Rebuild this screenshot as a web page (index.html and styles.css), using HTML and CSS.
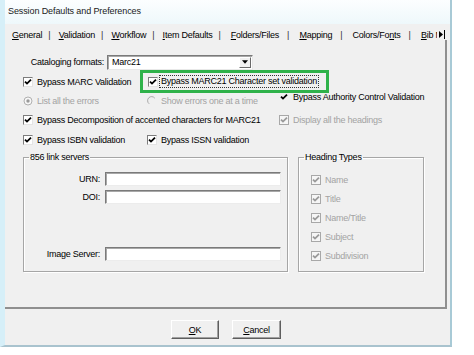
FILE: index.html
```html
<!DOCTYPE html>
<html>
<head>
  <title>Session Defaults and Preferences</title>
  <link rel="stylesheet" href="styles.css">
</head>
<body>
  <div class="window">
    <div class="titlebar">Session Defaults and Preferences</div>

    <div class="tabstrip">
      <div class="tabs">
        <span class="tab"><u>G</u>eneral</span><span class="sep">|</span>
        <span class="tab"><u>V</u>alidation</span><span class="sep">|</span>
        <span class="tab"><u>W</u>orkflow</span><span class="sep">|</span>
        <span class="tab"><u>I</u>tem Defaults</span><span class="sep">|</span>
        <span class="tab tab-wide"><u>F</u>olders/Files</span><span class="sep">|</span>
        <span class="tab tab-wide"><u>M</u>apping</span><span class="sep">|</span>
        <span class="tab tab-wide">Colors/Fo<u>n</u>ts</span><span class="sep">|</span>
        <span class="tab tab-wide"><u>B</u>ib MARC</span>
      </div>
      <span class="tabscroll">
        <svg viewBox="0 0 8 9"><path d="M2 1 L6 4.5 L2 8 Z" fill="#000"/><path d="M7.5 0 V9" stroke="#000" stroke-width="1"/></svg>
      </span>
    </div>

    <div class="page">
      <div class="row row-format">
        <span class="format-label">Cataloging formats:</span>
        <div class="combo">
          <span class="combo-text">Marc21</span>
          <span class="combo-btn">
            <svg viewBox="0 0 7 4"><path d="M0 0 H7 L3.5 4 Z" fill="#000"/></svg>
          </span>
        </div>
      </div>

      <div class="row row-1">
        <div class="cell c1-short">
          <span class="cb"><svg viewBox="0 0 8 8"><path d="M1 3.6 L3 5.6 L7 1.6" /></svg></span>
          Bypass MARC Validation
        </div>
        <div class="highlight">
          <span class="cb"><svg viewBox="0 0 8 8"><path d="M1 3.6 L3 5.6 L7 1.6" /></svg></span>
          <span class="focus">Bypass MARC21 Character set validation</span>
        </div>
      </div>

      <div class="row row-2">
        <div class="cell c1 disabled">
          <span class="rb"><svg viewBox="0 0 10 10"><circle cx="5" cy="5" r="4" fill="#f7f7f7" stroke="#b0b0b0"/><circle cx="5" cy="5" r="1.7" fill="#9a9a9a"/></svg></span>
          List all the errors
        </div>
        <div class="cell c2 disabled">
          <span class="rb"><svg viewBox="0 0 10 10"><path d="M7.8 2.2 A4 4 0 1 0 2.2 7.8" fill="none" stroke="#a8a8a8"/></svg></span>
          Show errors one at a time
        </div>
        <div class="cell authority">
          <span class="cb bare"><svg viewBox="0 0 8 8"><path d="M1 3.6 L3 5.6 L7 1.6" /></svg></span>
          Bypass Authority Control Validation
        </div>
      </div>

      <div class="row row-3">
        <div class="cell wide">
          <span class="cb"><svg viewBox="0 0 8 8"><path d="M1 3.6 L3 5.6 L7 1.6" /></svg></span>
          Bypass Decomposition of accented characters for MARC21
        </div>
        <div class="cell disabled">
          <span class="cb off"><svg viewBox="0 0 8 8"><path d="M1 3.6 L3 5.6 L7 1.6" /></svg></span>
          Display all the headings
        </div>
      </div>

      <div class="row row-4">
        <div class="cell c1">
          <span class="cb"><svg viewBox="0 0 8 8"><path d="M1 3.6 L3 5.6 L7 1.6" /></svg></span>
          Bypass ISBN validation
        </div>
        <div class="cell c2">
          <span class="cb"><svg viewBox="0 0 8 8"><path d="M1 3.6 L3 5.6 L7 1.6" /></svg></span>
          Bypass ISSN validation
        </div>
      </div>

      <div class="groups">
        <fieldset class="group links">
          <legend>856 link servers</legend>
          <div class="field urn">
            <span class="field-label">URN:</span>
            <span class="textbox"></span>
          </div>
          <div class="field doi">
            <span class="field-label">DOI:</span>
            <span class="textbox"></span>
          </div>
          <div class="field image">
            <span class="field-label">Image Server:</span>
            <span class="textbox"></span>
          </div>
        </fieldset>

        <fieldset class="group headings">
          <legend>Heading Types</legend>
          <div class="heading-list">
            <div class="cell disabled"><span class="cb off"><svg viewBox="0 0 8 8"><path d="M1 3.6 L3 5.6 L7 1.6" /></svg></span>Name</div>
            <div class="cell disabled"><span class="cb off"><svg viewBox="0 0 8 8"><path d="M1 3.6 L3 5.6 L7 1.6" /></svg></span>Title</div>
            <div class="cell disabled"><span class="cb off"><svg viewBox="0 0 8 8"><path d="M1 3.6 L3 5.6 L7 1.6" /></svg></span>Name/Title</div>
            <div class="cell disabled"><span class="cb off"><svg viewBox="0 0 8 8"><path d="M1 3.6 L3 5.6 L7 1.6" /></svg></span>Subject</div>
            <div class="cell disabled"><span class="cb off"><svg viewBox="0 0 8 8"><path d="M1 3.6 L3 5.6 L7 1.6" /></svg></span>Subdivision</div>
          </div>
        </fieldset>
      </div>
    </div>

    <div class="buttons">
      <button class="btn ok"><u>O</u>K</button>
      <button class="btn cancel"><u>C</u>ancel</button>
    </div>
  </div>
</body>
</html>
```

FILE: styles.css
```css
body {
  margin: 0;
  background: #ffffff;
  font-family: 'Liberation Sans', Arial, sans-serif;
  font-size: 9px;
  letter-spacing: -0.25px;
  color: #000;
}

.window {
  width: 452px;
  box-sizing: border-box;
  background: #f0f0f0;
  border-left: 5px solid #d6eff8;
  border-right: 2px solid #a8cad6;
  border-bottom: 2px solid #a9c3ce;
}

.titlebar {
  height: 24px;
  line-height: 22px;
  padding-left: 3px;
  background: linear-gradient(#fcfeff, #eef8fb);
  letter-spacing: -0.1px;
  color: #1a1a1a;
}

/* tab strip */
.tabstrip {
  display: flex;
  height: 16px;
  line-height: 22px;
}

.tabs {
  flex: 1;
  overflow: hidden;
  white-space: nowrap;
  padding-left: 1px;
}

.tab {
  padding: 0 6px;
}

.tab-wide {
  padding: 0 8px;
}

.sep {
  color: #333;
}

.tabscroll {
  width: 10px;
  height: 10px;
  margin: 6px 3px 0 0;
  background: #f0f0f0;
}

.tabscroll svg {
  display: block;
  width: 8px;
  height: 9px;
}

/* page */
.page {
  height: 269px;
  box-sizing: border-box;
  margin-right: 3px;
  padding: 14px 0 0 18px;
  border-right: 2px solid #8f8f8f;
  border-bottom: 2px solid #8f8f8f;
}

.row {
  display: flex;
  align-items: center;
}

.row-format { height: 16px; }
.row-1 { height: 23px; }
.row-2 { height: 15px; }
.row-3 { height: 23px; }
.row-4 { height: 17px; }

.cell {
  display: flex;
  align-items: center;
  white-space: nowrap;
}

.c1 { width: 124px; }
.c1-short { width: 117px; }
.c2 { width: 132px; }
.wide { width: 256px; }

.authority {
  margin-top: -7px;
}

.disabled {
  color: #a3a3a3;
}

.format-label {
  width: 81px;
  text-align: right;
  margin-right: 3px;
}

.combo {
  width: 146px;
  height: 15px;
  box-sizing: border-box;
  display: flex;
  align-items: center;
  background: #fff;
  border: 1px solid;
  border-color: #7a7a7a #e8e8e8 #e8e8e8 #7a7a7a;
  box-shadow: inset 1px 1px 0 #a8a8a8;
}

.combo-text {
  flex: 1;
  padding-left: 4px;
}

.combo-btn {
  width: 12px;
  height: 11px;
  margin-right: 1px;
  box-sizing: border-box;
  display: flex;
  align-items: center;
  justify-content: center;
  background: #f0f0f0;
  border: 1px solid;
  border-color: #fff #6a6a6a #6a6a6a #fff;
}

.combo-btn svg {
  width: 6px;
  height: 4px;
}

/* checkboxes and radios */
.cb {
  flex: none;
  width: 10px;
  height: 10px;
  box-sizing: border-box;
  margin-right: 4px;
  display: flex;
  align-items: center;
  justify-content: center;
  background: #fff;
  border: 1px solid;
  border-color: #7c7c7c #e4e4e4 #e4e4e4 #7c7c7c;
}

.cb svg {
  display: block;
  width: 8px;
  height: 8px;
}

.cb path {
  fill: none;
  stroke: #000;
  stroke-width: 1.8;
}

.cb.bare {
  background: transparent;
  border-color: transparent;
}

.cb.off {
  background: #f6f6f6;
  border-color: #a8a8a8;
}

.cb.off path {
  stroke: #9a9a9a;
}

.rb {
  flex: none;
  width: 10px;
  height: 10px;
  margin-right: 4px;
}

.rb svg {
  display: block;
  width: 10px;
  height: 10px;
}

.highlight {
  width: 189px;
  height: 23px;
  box-sizing: border-box;
  display: flex;
  align-items: center;
  padding-left: 5px;
  border: 3px solid #2fb24a;
  white-space: nowrap;
}

.highlight .cb {
  margin-right: 2px;
}

.focus {
  padding: 0 1px;
  line-height: 11px;
  outline: 1px dotted #333;
}

/* group boxes */
.groups {
  display: flex;
  gap: 10px;
  margin-top: 3px;
}

.group {
  margin: 0;
  padding: 0;
  height: 121px;
  box-sizing: border-box;
  min-inline-size: 0;
  border: 1px solid #a6a6a6;
  box-shadow: 1px 1px 0 #fff, inset 1px 1px 0 #fff;
}

.group legend {
  margin-left: 5px;
  padding: 0 1px;
  line-height: 12px;
}

.links { width: 265px; }
.headings { width: 126px; }

.field {
  display: flex;
  align-items: center;
  height: 14px;
}

.urn { margin-top: 9px; }
.doi { margin-top: 4px; }
.image { margin-top: 43px; }

.field-label {
  width: 76px;
  text-align: right;
  margin-right: 5px;
}

.textbox {
  width: 176px;
  height: 14px;
  box-sizing: border-box;
  background: #fff;
  border: 1px solid;
  border-color: #7a7a7a #ececec #ececec #7a7a7a;
  box-shadow: inset 1px 1px 0 #a8a8a8;
}

.heading-list {
  padding: 7px 0 0 12px;
}

.heading-list .cell {
  height: 19px;
}

/* buttons */
.buttons {
  display: flex;
  justify-content: center;
  gap: 13px;
  padding: 11px 3px 6px 0;
}

.btn {
  height: 19px;
  box-sizing: border-box;
  padding: 0;
  font-family: inherit;
  font-size: 9px;
  letter-spacing: -0.25px;
  color: #000;
  background: #f0f0f0;
  border: 1px solid;
  border-color: #fff #5e5e5e #5e5e5e #fff;
  box-shadow: inset -1px -1px 0 #a0a0a0;
}

.ok { width: 48px; }
.cancel { width: 49px; }
```
